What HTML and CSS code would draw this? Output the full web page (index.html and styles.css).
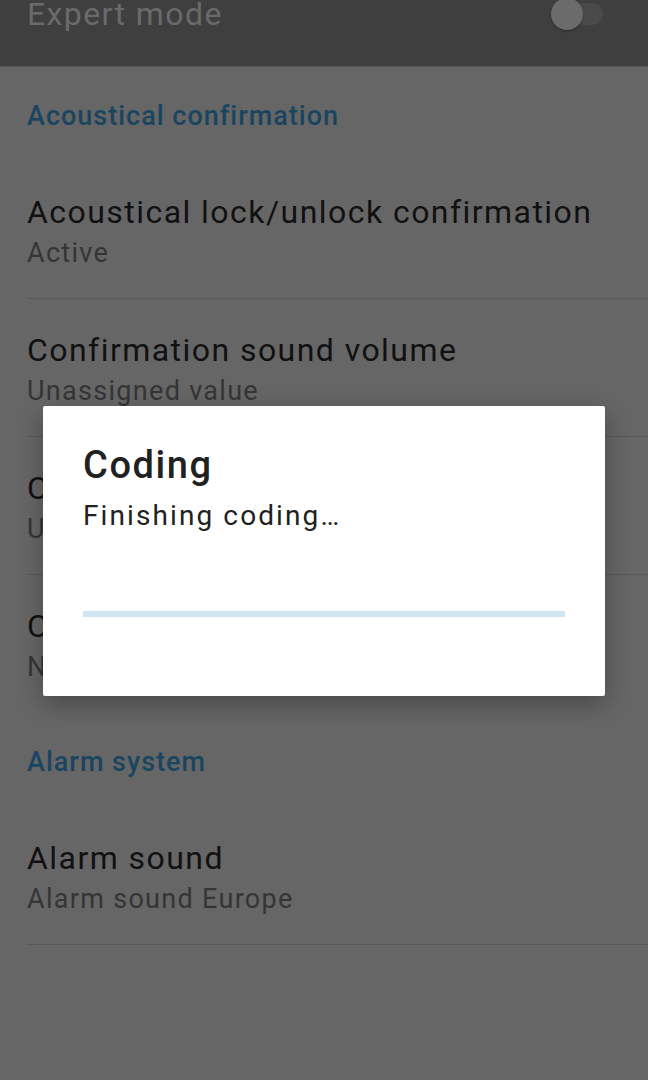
FILE: index.html
```html
<!DOCTYPE html>
<html lang="en">
<head>
    <meta charset="UTF-8">
    <meta name="viewport" content="width=device-width, initial-scale=1.0">
    <title>Settings</title>
    <link rel="stylesheet" href="styles.css">
</head>
<body>
    <div class="top-bar">
        <div class="top-row">
            <span class="top-title">Expert mode</span>
            <div class="switch">
                <div class="switch-thumb"></div>
            </div>
        </div>
    </div>

    <div class="pref-list">
        <div class="pref-header">Acoustical confirmation</div>
        <div class="pref-item">
            <div class="pref-title">Acoustical lock/unlock confirmation</div>
            <div class="pref-summary">Active</div>
        </div>
        <div class="pref-item">
            <div class="pref-title">Confirmation sound volume</div>
            <div class="pref-summary">Unassigned value</div>
        </div>
        <div class="pref-item">
            <div class="pref-title">Confirmation sound type</div>
            <div class="pref-summary">Unassigned value</div>
        </div>
        <div class="pref-item last">
            <div class="pref-title">Confirmation light</div>
            <div class="pref-summary">Not active</div>
        </div>

        <div class="pref-header">Alarm system</div>
        <div class="pref-item">
            <div class="pref-title">Alarm sound</div>
            <div class="pref-summary">Alarm sound Europe</div>
        </div>
    </div>

    <div class="dialog">
        <div class="dialog-title">Coding</div>
        <div class="dialog-message">Finishing coding…</div>
        <div class="progress"></div>
    </div>
</body>
</html>
```

FILE: styles.css
```css
body {
    margin: 0;
    background-color: #666666;
    font-family: Roboto, "Noto Sans", sans-serif;
    position: relative;
    min-height: 1080px;
}

.top-bar {
    height: 66px;
    background-color: #3f3f3f;
    border-bottom: 1px solid #575757;
    overflow: hidden;
}
.top-row {
    display: flex;
    justify-content: space-between;
    align-items: center;
    margin-top: -4px;
    padding: 0 45px 0 27px;
}
.top-title {
    font-size: 32px;
    line-height: 36px;
    letter-spacing: 1.4px;
    color: #6a6a6a;
}
.switch {
    position: relative;
    width: 48px;
    height: 22px;
    border-radius: 11px;
    background-color: #4a4a4a;
}
.switch-thumb {
    position: absolute;
    left: -4px;
    top: -5px;
    width: 32px;
    height: 32px;
    border-radius: 50%;
    background-color: #6b6b6b;
    box-shadow: 0 1px 3px rgba(0, 0, 0, 0.3);
}

.pref-header {
    padding: 31px 27px 27px;
    font-size: 27px;
    line-height: 36px;
    font-weight: 500;
    letter-spacing: 1px;
    color: #1a4560;
}
.pref-item {
    margin-left: 27px;
    padding: 31px 0 24px;
    border-bottom: 1px solid #595959;
}
.pref-item.last {
    border-bottom: none;
    padding-bottom: 25px;
}
.pref-title {
    font-size: 32px;
    line-height: 40px;
    letter-spacing: 1.45px;
    color: #111111;
}
.pref-summary {
    font-size: 27px;
    line-height: 42px;
    letter-spacing: 1.3px;
    color: #353535;
}

.dialog {
    position: absolute;
    top: 406px;
    left: 43px;
    width: 562px;
    box-sizing: border-box;
    padding: 35px 40px 79px;
    background-color: #ffffff;
    border-radius: 2px;
    box-shadow: 0 8px 24px rgba(0, 0, 0, 0.3);
}
.dialog-title {
    font-size: 38px;
    line-height: 48px;
    font-weight: 500;
    letter-spacing: 1.6px;
    color: #212121;
    margin-bottom: 7px;
}
.dialog-message {
    font-size: 28px;
    line-height: 40px;
    letter-spacing: 2.1px;
    color: #212121;
}
.progress {
    margin-top: 75px;
    height: 6px;
    background-color: #cfe5f1;
}
```
